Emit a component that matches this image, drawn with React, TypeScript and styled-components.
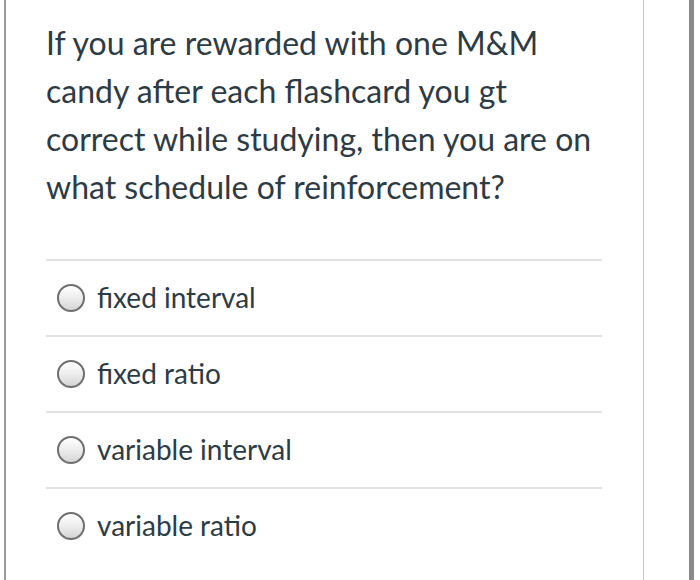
import React from 'react';
import styled, { createGlobalStyle } from 'styled-components';

const GlobalStyle = createGlobalStyle`
  html, body {
    margin: 0;
    padding: 0;
    background: #fff;
  }
  body {
    font-family: Lato, "Open Sans", "Liberation Sans", sans-serif;
    color: #2d3b45;
  }
`;

const Page = styled.div`
  display: flex;
  width: 700px;
  height: 580px;
  padding-left: 4px;
  box-sizing: border-box;
  overflow: hidden;
`;

const Card = styled.div`
  width: 640px;
  box-sizing: border-box;
  border-left: 2px solid #9a9a9a;
  border-right: 1px solid #c4c4c4;
  padding: 19px 41px 0 40px;
`;

const Question = styled.p`
  margin: 0 0 48px;
  font-size: 32px;
  line-height: 48px;
  color: #2d3b45;
`;

const Answers = styled.ul`
  list-style: none;
  margin: 0;
  padding: 0;
`;

const Answer = styled.li`
  display: flex;
  align-items: center;
  gap: 12px;
  height: 74px;
  box-sizing: content-box;
  border-top: 2px solid #e2e2e2;
  padding-left: 11px;
  font-size: 28px;
  color: #2d3b45;
  & > span:last-child {
    margin-bottom: 3px;
  }
`;

const Radio = styled.span`
  flex: none;
  width: 24px;
  height: 24px;
  border-radius: 50%;
  border: 2px solid #6f6f6f;
  background: linear-gradient(180deg, #ffffff 0%, #e9e9e9 60%, #d4d4d4 100%);
`;

const Label = styled.span`
  display: block;
`;

const Edge = styled.div`
  width: 5px;
  margin-left: 45px;
  background: #8a8a8a;
`;

const options = ['fixed interval', 'fixed ratio', 'variable interval', 'variable ratio'];

const App: React.FC = () => {
  return (
    <>
      <GlobalStyle />
      <Page>
        <Card>
          <Question>
            If you are rewarded with one M&amp;M candy after each flashcard you gt correct while studying, then
            you are on what schedule of reinforcement?
          </Question>
          <Answers>
            {options.map((o) => (
              <Answer key={o}>
                <Radio />
                <Label>{o}</Label>
              </Answer>
            ))}
          </Answers>
        </Card>
        <Edge />
      </Page>
    </>
  );
};

export default App;
